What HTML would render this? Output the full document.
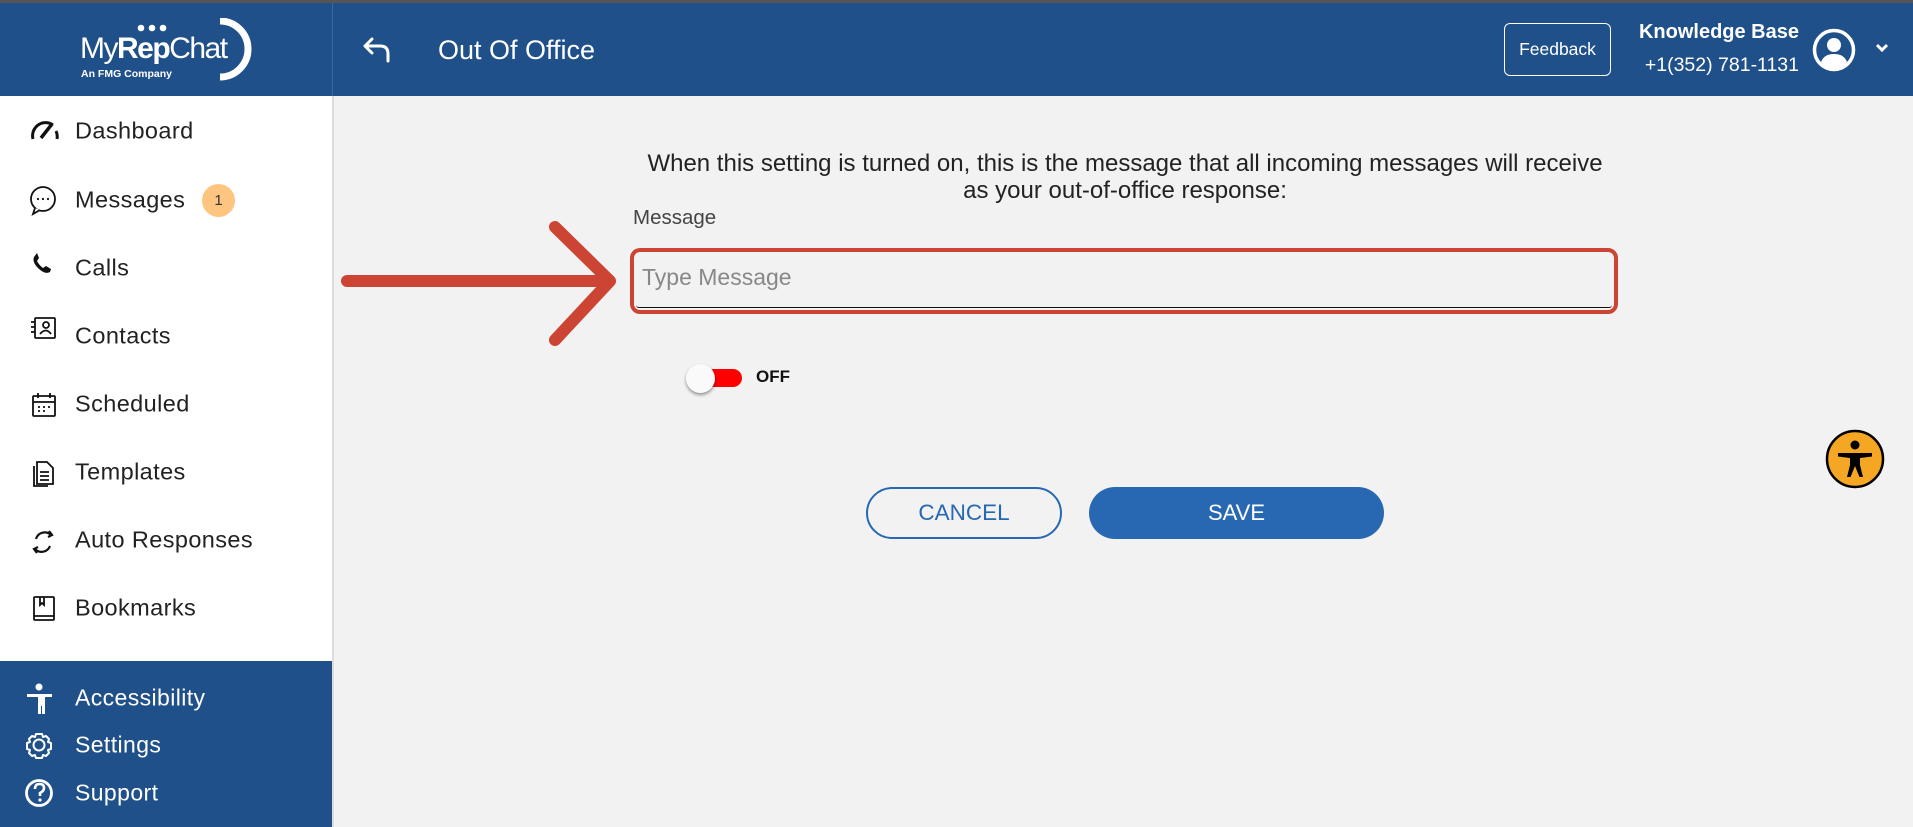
<!DOCTYPE html>
<html><head><meta charset="utf-8"><style>
*{margin:0;padding:0;box-sizing:border-box}
body{width:1913px;height:827px;position:relative;overflow:hidden;background:#f2f2f2;font-family:"Liberation Sans",sans-serif}
.abs{position:absolute}
.nav{position:absolute;left:75px;font-size:23.5px;color:#222;letter-spacing:0.4px;transform:translateY(-50%)}
.bnav{position:absolute;left:75px;font-size:23px;color:#fff;letter-spacing:0.4px;transform:translateY(-50%)}
</style></head><body>
<div class="abs" style="left:0;top:0;width:1913px;height:3px;background:#555"></div>
<div class="abs" style="left:0;top:3px;width:1913px;height:93px;background:#205089"></div>
<div class="abs" style="left:332px;top:3px;width:1px;height:93px;background:#3c68a0"></div>
<div class="abs" style="left:0;top:96px;width:332px;height:565px;background:#fff"></div>
<div class="abs" style="left:332px;top:96px;width:2px;height:731px;background:#ddd"></div>
<div class="abs" style="left:0;top:661px;width:332px;height:166px;background:#205089"></div>

<svg class="abs" style="left:70px;top:18px" width="190" height="65" viewBox="0 0 190 65">
<circle cx="71" cy="10" r="3.3" fill="#fff"/><circle cx="82" cy="10" r="3.3" fill="#fff"/><circle cx="93" cy="10" r="3.3" fill="#fff"/>
<path d="M150 3 A28 28 0 0 1 150 59" stroke="#fff" stroke-width="7" fill="none"/>
<text x="10" y="40" fill="#fff" font-family="Liberation Sans" font-size="30" letter-spacing="-1.5">My<tspan font-weight="bold">Rep</tspan>Chat</text>
<text x="11" y="59" fill="#fff" font-family="Liberation Sans" font-size="10.5" font-weight="bold">An FMG Company</text>
</svg>

<svg class="abs" style="left:362px;top:36px" width="30" height="28" viewBox="0 0 30 28"><path d="M10 3 L3 10 L10 17 M3 10 H18 Q26 10 26 18 V25" stroke="#fff" stroke-width="3" fill="none" stroke-linecap="round" stroke-linejoin="round"/></svg>
<div class="abs" style="left:438px;top:35px;font-size:27px;color:#fff">Out Of Office</div>
<div class="abs" style="left:1504px;top:23px;width:107px;height:53px;border:1.5px solid #fff;border-radius:6px;color:#fff;font-size:17.5px;display:flex;align-items:center;justify-content:center">Feedback</div>
<div class="abs" style="right:114px;top:21px;font-size:20px;font-weight:bold;color:#fff">Knowledge Base</div>
<div class="abs" style="right:114px;top:54px;font-size:19.5px;color:#fff">+1(352) 781-1131</div>
<svg class="abs" style="left:1812px;top:28px" width="44" height="44" viewBox="0 0 44 44"><circle cx="22" cy="22" r="19.5" stroke="#fff" stroke-width="3.5" fill="none"/><circle cx="22" cy="17" r="7" fill="#fff"/><path d="M9 34 Q12 26 22 26 Q32 26 35 34 Q29 41 22 41 Q15 41 9 34Z" fill="#fff"/></svg>
<svg class="abs" style="left:1875px;top:43px" width="14" height="10" viewBox="0 0 14 10"><path d="M2 2 L7 7 L12 2" stroke="#fff" stroke-width="3" fill="none"/></svg>

<svg class="abs" style="left:0;top:0" width="70" height="827" viewBox="0 0 70 827" fill="none" stroke="#111" stroke-width="2.2">
<path d="M33 139 A13 13 0 0 1 53 125 M56 131 A13 13 0 0 1 57 139" stroke-width="3"/><path d="M41 138 L52 124" stroke-width="3.5"/>
<circle cx="43" cy="199" r="12" stroke-width="1.8"/><path d="M35 208 L33 214 L40 210" fill="#fff" stroke-width="1.8"/><circle cx="38" cy="199" r="0.6" fill="#111" stroke-width="1"/><circle cx="43" cy="199" r="0.6" fill="#111" stroke-width="1"/><circle cx="48" cy="199" r="0.6" fill="#111" stroke-width="1"/>
<path d="M34 257 Q32 262 38 268 Q45 275 50 272 L51 269 L46 266 L43 268 Q39 265 37 261 L39 258 L37 253 Z" fill="#111" stroke="none"/>
<rect x="35" y="318" width="20" height="20" rx="1" stroke-width="1.8"/><circle cx="46" cy="325" r="3" stroke-width="1.8"/><path d="M40 334 Q46 327 51 334 M31 322 h4 M31 327 h4 M31 332 h4" stroke-width="1.8"/>
<rect x="33" y="396" width="22" height="20" rx="1" stroke-width="1.8"/><path d="M33 402 h22 M38 393 v5 M50 393 v5 M38 407 h2 M43 407 h2 M48 407 h2 M38 411 h2 M43 411 h2" stroke-width="1.8"/>
<path d="M37 462 h10 l6 6 v16 h-16 z M34 466 v20 h14 M40 472 h9 M40 476 h9 M40 480 h9" stroke-width="1.8"/>
<path d="M36 539 A9 9 0 0 1 51 535 M50 546 A9 9 0 0 1 35 549 M49 531 l3 4 -4 2 M37 553 l-3 -4 4 -2"/>
<rect x="34" y="597" width="20" height="23" rx="1" stroke-width="1.8"/><path d="M34 616 h20 M40 597 v8 l2 -2 2 2 v-8" stroke-width="1.8"/>
</svg>
<div class="nav" style="top:131px">Dashboard</div>
<div class="nav" style="top:200px">Messages</div>
<div class="abs" style="left:202px;top:184px;width:33px;height:33px;border-radius:50%;background:#fdc57f;color:#333;font-size:15px;display:flex;align-items:center;justify-content:center">1</div>
<div class="nav" style="top:268px">Calls</div>
<div class="nav" style="top:336px">Contacts</div>
<div class="nav" style="top:404px">Scheduled</div>
<div class="nav" style="top:472px">Templates</div>
<div class="nav" style="top:540px">Auto Responses</div>
<div class="nav" style="top:608px">Bookmarks</div>

<svg class="abs" style="left:0;top:661px" width="70" height="166" viewBox="0 0 70 166">
<circle cx="39" cy="26" r="3.5" fill="#fff"/><path d="M27 33 h25 v3 h-7 v17 h-3 v-8 h-1 v8 h-3 v-17 h-11z" fill="#fff"/>
<circle cx="39" cy="84" r="5.5" stroke="#fff" stroke-width="2" fill="none"/><path d="M36 73 h6 l1 3 3 -1 3 3 -1 3 3 1 v6 l-3 1 1 3 -3 3 -3 -1 -1 3 h-6 l-1 -3 -3 1 -3 -3 1 -3 -3 -1 v-6 l3 -1 -1 -3 3 -3 3 1z" stroke="#fff" stroke-width="2" fill="none" stroke-linejoin="round"/>
<circle cx="39" cy="132" r="12.5" stroke="#fff" stroke-width="2.8" fill="none"/><path d="M35 128 Q35 123 39.5 123 Q44 123 44 127 Q44 130 40 132 V135" stroke="#fff" stroke-width="2.6" fill="none"/><circle cx="40" cy="139" r="1.6" fill="#fff"/>
</svg>
<div class="bnav" style="top:698px">Accessibility</div>
<div class="bnav" style="top:745px">Settings</div>
<div class="bnav" style="top:793px">Support</div>

<div class="abs" style="left:575px;width:1100px;top:150px;text-align:center;font-size:24px;line-height:27px;color:#222">When this setting is turned on, this is the message that all incoming messages will receive<br>as your out-of-office response:</div>
<div class="abs" style="left:633px;top:206px;font-size:20.5px;color:#444">Message</div>
<div class="abs" style="left:630px;top:248px;width:988px;height:66px;border:4px solid #cc4433;border-radius:10px"></div>
<div class="abs" style="left:636px;top:254px;width:976px;height:54px;border-bottom:1.5px solid #111;border-radius:3px"></div>
<div class="abs" style="left:642px;top:264px;font-size:23px;color:#888">Type Message</div>

<svg class="abs" style="left:330px;top:210px" width="300" height="150" viewBox="0 0 300 150">
<path d="M17 71 H280 M225 17 L280 71 L225 130" stroke="#cc4433" stroke-width="12" fill="none" stroke-linecap="round" stroke-linejoin="round"/>
</svg>

<div class="abs" style="left:700px;top:369px;width:42px;height:18px;border-radius:9px;background:#f00"></div>
<div class="abs" style="left:686px;top:364px;width:29px;height:29px;border-radius:50%;background:#fafafa;box-shadow:0 2px 3px rgba(0,0,0,.4)"></div>
<div class="abs" style="left:756px;top:367px;font-size:17px;font-weight:bold;color:#111">OFF</div>

<div class="abs" style="left:866px;top:487px;width:196px;height:52px;border:2px solid #2868b3;border-radius:26px;color:#2868b3;font-size:22.5px;display:flex;align-items:center;justify-content:center">CANCEL</div>
<div class="abs" style="left:1089px;top:487px;width:295px;height:52px;background:#2868b3;border-radius:26px;color:#fff;font-size:22px;display:flex;align-items:center;justify-content:center">SAVE</div>

<svg class="abs" style="left:1825px;top:429px" width="60" height="60" viewBox="0 0 60 60">
<circle cx="30" cy="30" r="28" fill="#f5a623" stroke="#000" stroke-width="2.5"/>
<circle cx="30" cy="16" r="4.5" fill="#000"/>
<path d="M13 24 L47 24 L47 27.5 L35 29 L35 36 L38 48 L34.5 48 L30 37 L25.5 48 L22 48 L25 36 L25 29 L13 27.5Z" fill="#000"/>
</svg>
</body></html>
